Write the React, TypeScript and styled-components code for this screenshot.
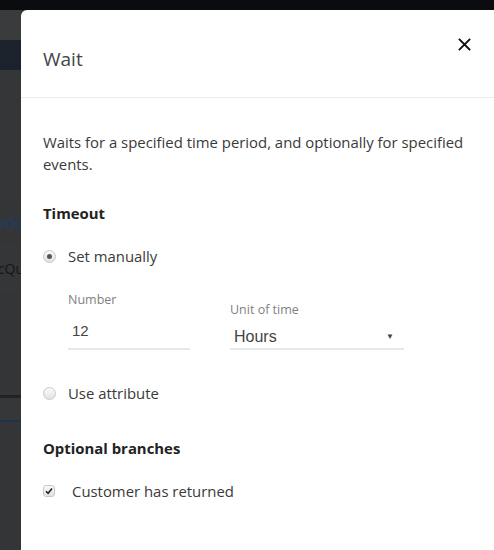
import styled, { createGlobalStyle } from "styled-components";

const GlobalStyle = createGlobalStyle`
  html, body {
    margin: 0;
    padding: 0;
    height: 100%;
    overflow: hidden;
    background: #323334;
  }
  #root {
    height: 100%;
  }
`;

const Screen = styled.div`
  height: 550px;
  width: 494px;
  display: flex;
  flex-direction: column;
  font-family: "Open Sans", "Liberation Sans", sans-serif;
  color: #333;
`;

const TopBar = styled.div`
  height: 10px;
  flex: none;
  background: #0b0c0f;
`;

const Body = styled.div`
  flex: 1;
  display: flex;
  min-height: 0;
`;

// the page behind the drawer, only a sliver of it shows
const Behind = styled.div`
  width: 21px;
  flex: none;
  display: flex;
  flex-direction: column;
  overflow: hidden;
  background: #343536;
`;

const Band = styled.div<{ $h: number; $bg: string }>`
  height: ${({ $h }) => $h}px;
  flex: none;
  background: ${({ $bg }) => $bg};
  display: flex;
  align-items: center;
  justify-content: flex-end;
  overflow: hidden;
  white-space: nowrap;
`;

const BehindText = styled.span<{ $color: string; $bold?: boolean }>`
  font-size: 14px;
  font-weight: ${({ $bold }) => ($bold ? 700 : 400)};
  color: ${({ $color }) => $color};
  margin-right: -3px;
`;

const Drawer = styled.div`
  flex: 1;
  background: #fff;
  border-top-left-radius: 6px;
  display: flex;
  flex-direction: column;
`;

const Header = styled.div`
  height: 88px;
  flex: none;
  display: flex;
  justify-content: space-between;
  align-items: flex-start;
  border-bottom: 1px solid #eaeded;
  padding: 0 23px 0 22px;
  box-sizing: border-box;
`;

const Title = styled.h2`
  margin: 37px 0 0;
  font-size: 19px;
  font-weight: 400;
  line-height: 24px;
  color: #444;
`;

const CloseButton = styled.button`
  margin-top: 28px;
  border: 0;
  background: none;
  padding: 0;
  width: 13px;
  height: 13px;
  cursor: pointer;
  display: flex;
`;

const Content = styled.div`
  padding: 33px 22px 0 22px;
  display: flex;
  flex-direction: column;
`;

const Description = styled.p`
  margin: 0;
  font-size: 14.9px;
  line-height: 22px;
  color: #3a3a3a;
`;

const SectionTitle = styled.h3<{ $top: number }>`
  margin: ${({ $top }) => $top}px 0 0;
  font-size: 14.9px;
  font-weight: 700;
  line-height: 20px;
  color: #222;
`;

const OptionRow = styled.label<{ $top: number }>`
  margin-top: ${({ $top }) => $top}px;
  display: flex;
  align-items: center;
  gap: 12px;
  font-size: 14.9px;
  line-height: 20px;
  color: #3a3a3a;
`;

const Radio = styled.span<{ $checked?: boolean }>`
  width: 13px;
  height: 13px;
  margin-left: 0;
  border-radius: 50%;
  border: 1px solid #c8c8c8;
  background: linear-gradient(#fafafa, #e2e2e2);
  display: flex;
  align-items: center;
  justify-content: center;
  box-sizing: border-box;
  flex: none;

  &::after {
    content: "";
    width: 5px;
    height: 5px;
    border-radius: 50%;
    background: ${({ $checked }) => ($checked ? "#555" : "transparent")};
  }
`;

const Checkbox = styled.span`
  width: 12px;
  height: 12px;
  border-radius: 3px;
  border: 1px solid #c8c8c8;
  background: linear-gradient(#fafafa, #e2e2e2);
  box-sizing: border-box;
  display: flex;
  align-items: center;
  justify-content: center;
  flex: none;
  margin-right: 5px;
`;

const Fields = styled.div`
  margin: 26px 0 0 25px;
  display: flex;
  align-items: flex-end;
  gap: 40px;
`;

const Field = styled.div<{ $width: number }>`
  width: ${({ $width }) => $width}px;
  display: flex;
  flex-direction: column;
`;

const FieldLabel = styled.span`
  font-size: 12.5px;
  line-height: 16px;
  color: #7f7f7f;
`;

const InputLine = styled.div<{ $size: number; $top: number; $h: number }>`
  margin-top: ${({ $top }) => $top}px;
  height: ${({ $h }) => $h}px;
  border-bottom: 2px solid #e8e8e8;
  display: flex;
  align-items: flex-start;
  justify-content: space-between;
  padding: 0 10px 0 4px;
  line-height: 18px;
  font-family: "Liberation Sans", Arial, sans-serif;
  font-size: ${({ $size }) => $size}px;
  color: #444;
`;

const Arrow = styled.span`
  font-size: 8px;
  line-height: 18px;
  color: #444;
`;

export default function App() {
  return (
    <Screen>
      <GlobalStyle />
      <TopBar />
      <Body>
        <Behind>
          <Band $h={30} $bg="#3a3b3c" />
          <Band $h={30} $bg="#1c222c" />
          <Band $h={130} $bg="#353637" />
          <Band $h={44} $bg="#343536">
            <BehindText $color="#203b5e" $bold>
              orki
            </BehindText>
          </Band>
          <Band $h={48} $bg="#353637">
            <BehindText $color="#151515">icQu</BehindText>
          </Band>
          <Band $h={103} $bg="#343536" />
          <Band $h={3} $bg="#222324" />
          <Band $h={22} $bg="#363738" />
          <Band $h={2} $bg="#1f3350" />
          <Band $h={130} $bg="#343536" />
        </Behind>
        <Drawer>
          <Header>
            <Title>Wait</Title>
            <CloseButton aria-label="Close">
              <svg width="13" height="13" viewBox="0 0 13 13">
                <path
                  d="M1.5 1.5 L11.5 11.5 M11.5 1.5 L1.5 11.5"
                  stroke="#111"
                  strokeWidth="1.8"
                  strokeLinecap="square"
                />
              </svg>
            </CloseButton>
          </Header>
          <Content>
            <Description>
              Waits for a specified time period, and optionally for specified
              events.
            </Description>
            <SectionTitle $top={28}>Timeout</SectionTitle>
            <OptionRow $top={23}>
              <Radio $checked />
              Set manually
            </OptionRow>
            <Fields>
              <Field $width={122}>
                <FieldLabel>Number</FieldLabel>
                <InputLine $size={15} $top={14} $h={26}>
                  12
                </InputLine>
              </Field>
              <Field $width={174}>
                <FieldLabel>Unit of time</FieldLabel>
                <InputLine $size={16} $top={10} $h={20}>
                  Hours
                  <Arrow>▼</Arrow>
                </InputLine>
              </Field>
            </Fields>
            <OptionRow $top={33}>
              <Radio />
              Use attribute
            </OptionRow>
            <SectionTitle $top={35}>Optional branches</SectionTitle>
            <OptionRow $top={23}>
              <Checkbox>
                <svg width="8" height="8" viewBox="0 0 8 8">
                  <path
                    d="M1 4.2 L3.1 6.3 L7 1.5"
                    stroke="#222"
                    strokeWidth="1.6"
                    fill="none"
                  />
                </svg>
              </Checkbox>
              Customer has returned
            </OptionRow>
          </Content>
        </Drawer>
      </Body>
    </Screen>
  );
}
